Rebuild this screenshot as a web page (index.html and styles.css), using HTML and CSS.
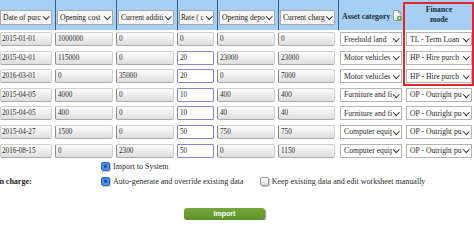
FILE: index.html
```html
<!DOCTYPE html>
<html lang="en">
<head>
    <meta charset="UTF-8">
    <title>Import fixed assets</title>
    <link rel="stylesheet" href="styles.css">
</head>
<body>
    <div class="sheet">
        <div class="grid">
            <div class="hcell first"><div class="hsel"><span>Date of purc</span><i class="chev"></i></div></div>
            <div class="hcell"><div class="hsel"><span>Opening cost</span><i class="chev"></i></div></div>
            <div class="hcell"><div class="hsel"><span>Current additi</span><i class="chev"></i></div></div>
            <div class="hcell"><div class="hsel narrow"><span>Rate ( c</span><i class="chev"></i></div></div>
            <div class="hcell"><div class="hsel"><span>Opening depo</span><i class="chev"></i></div></div>
            <div class="hcell"><div class="hsel"><span>Current charg</span><i class="chev"></i></div></div>
            <div class="hcell htitle">
                <b>Asset category</b>
                <svg class="xls" width="9" height="11" viewBox="0 0 9 11">
                    <path d="M0.5 0.5h5l2.5 2.5v7.5h-7.5z" fill="#f4f4f4" stroke="#9a9a9a"/>
                    <path d="M5.5 0.5v2.5h2.5" fill="none" stroke="#9a9a9a"/>
                    <circle cx="6.3" cy="8.2" r="2.4" fill="#3aa335"/>
                    <path d="M6.3 6.8v2.8M4.9 8.2h2.8" stroke="#fff" stroke-width="0.9"/>
                </svg>
            </div>
            <div class="hcell hmode"><b>Finance<br>mode</b></div>

            <!-- rows -->
            <div class="cell first"><div class="inp">2015-01-01</div></div>
            <div class="cell"><div class="inp">1000000</div></div>
            <div class="cell"><div class="inp">0</div></div>
            <div class="cell"><div class="inp">0</div></div>
            <div class="cell"><div class="inp">0</div></div>
            <div class="cell"><div class="inp">0</div></div>
            <div class="cell sel-cell"><div class="sel"><span>Freehold land</span><i class="chev"></i></div></div>
            <div class="cell sel-cell"><div class="sel"><span>TL - Term Loan</span><i class="chev"></i></div></div>

            <div class="cell first"><div class="inp">2015-02-01</div></div>
            <div class="cell"><div class="inp">115000</div></div>
            <div class="cell"><div class="inp">0</div></div>
            <div class="cell"><div class="inp rate">20</div></div>
            <div class="cell"><div class="inp">23000</div></div>
            <div class="cell"><div class="inp">23000</div></div>
            <div class="cell sel-cell"><div class="sel"><span>Motor vehicles</span><i class="chev"></i></div></div>
            <div class="cell sel-cell"><div class="sel"><span>HP - Hire purch</span><i class="chev"></i></div></div>

            <div class="cell first"><div class="inp">2016-03-01</div></div>
            <div class="cell"><div class="inp">0</div></div>
            <div class="cell"><div class="inp">35000</div></div>
            <div class="cell"><div class="inp rate">20</div></div>
            <div class="cell"><div class="inp">0</div></div>
            <div class="cell"><div class="inp">7000</div></div>
            <div class="cell sel-cell"><div class="sel"><span>Motor vehicles</span><i class="chev"></i></div></div>
            <div class="cell sel-cell"><div class="sel"><span>HP - Hire purch</span><i class="chev"></i></div></div>

            <div class="cell first"><div class="inp">2015-04-05</div></div>
            <div class="cell"><div class="inp">4000</div></div>
            <div class="cell"><div class="inp">0</div></div>
            <div class="cell"><div class="inp rate">10</div></div>
            <div class="cell"><div class="inp">400</div></div>
            <div class="cell"><div class="inp">400</div></div>
            <div class="cell sel-cell"><div class="sel"><span>Furniture and fit</span><i class="chev"></i></div></div>
            <div class="cell sel-cell"><div class="sel"><span>OP - Outright pu</span><i class="chev"></i></div></div>

            <div class="cell first"><div class="inp">2015-04-05</div></div>
            <div class="cell"><div class="inp">400</div></div>
            <div class="cell"><div class="inp">0</div></div>
            <div class="cell"><div class="inp rate">10</div></div>
            <div class="cell"><div class="inp">40</div></div>
            <div class="cell"><div class="inp">40</div></div>
            <div class="cell sel-cell"><div class="sel"><span>Furniture and fit</span><i class="chev"></i></div></div>
            <div class="cell sel-cell"><div class="sel"><span>OP - Outright pu</span><i class="chev"></i></div></div>

            <div class="cell first"><div class="inp">2015-04-27</div></div>
            <div class="cell"><div class="inp">1500</div></div>
            <div class="cell"><div class="inp">0</div></div>
            <div class="cell"><div class="inp rate">50</div></div>
            <div class="cell"><div class="inp">750</div></div>
            <div class="cell"><div class="inp">750</div></div>
            <div class="cell sel-cell"><div class="sel"><span>Computer equip</span><i class="chev"></i></div></div>
            <div class="cell sel-cell"><div class="sel"><span>OP - Outright pu</span><i class="chev"></i></div></div>

            <div class="cell first"><div class="inp">2016-08-15</div></div>
            <div class="cell"><div class="inp">0</div></div>
            <div class="cell"><div class="inp">2300</div></div>
            <div class="cell"><div class="inp rate">50</div></div>
            <div class="cell"><div class="inp">0</div></div>
            <div class="cell"><div class="inp">1150</div></div>
            <div class="cell sel-cell"><div class="sel"><span>Computer equip</span><i class="chev"></i></div></div>
            <div class="cell sel-cell"><div class="sel"><span>OP - Outright pu</span><i class="chev"></i></div></div>
        </div>
        <div class="focus-box"></div>
    </div>

    <div class="options">
        <div class="opt-row">
            <div class="opt-label"></div>
            <label class="radio"><span class="dot on"></span>Import to System</label>
        </div>
        <div class="opt-row">
            <div class="opt-label">Depreciation charge:</div>
            <label class="radio"><span class="dot on"></span>Auto-generate and override existing data</label>
            <label class="radio second"><span class="dot"></span>Keep existing data and edit worksheet manually</label>
        </div>
    </div>

    <div class="actions">
        <button class="import-btn">Import</button>
    </div>
</body>
</html>
```

FILE: styles.css
```css
body {
    margin: 0;
    padding: 0;
    background: white;
    color: #2b2b2b;
    font-family: "Liberation Serif", serif;
    font-size: 8px;
    overflow: hidden;
}
.sheet {
    position: relative;
}
.grid {
    display: grid;
    grid-template-columns: 55px 61px 61px 40px 61px 60px 66px 70px;
    grid-auto-rows: 18.6px;
    grid-template-rows: 30px;
    font-size: 7.2px;
}
.hcell {
    background: #a6cff3;
    border-left: 1px solid #2f618f;
    padding: 10px 3px 0 1px;
    box-sizing: border-box;
}
.hcell.first {
    border-left: none;
    padding-left: 0;
}
.hsel {
    display: flex;
    align-items: center;
    height: 15px;
    box-sizing: border-box;
    background: #f6f6f6;
    border: 1px solid #a9a9a9;
    padding: 0 2px 0 2px;
    color: #222;
    font-size: 7.6px;
    white-space: nowrap;
    overflow: hidden;
}
.hsel.narrow {
    padding: 0 1px 0 1px;
    font-size: 7.3px;
}
.hsel span,
.sel span {
    flex: 1;
    overflow: hidden;
}
.chev {
    flex: none;
    width: 3.5px;
    height: 3.5px;
    border-right: 1.1px solid #333;
    border-bottom: 1.1px solid #333;
    transform: rotate(45deg);
    margin: -2px 1px 0 2px;
}
.htitle {
    display: flex;
    align-items: flex-start;
    padding: 10px 0 0 3px;
    color: #1b2a3a;
    font-size: 7.8px;
    white-space: nowrap;
}
.htitle b {
    margin-top: 2px;
}
.xls {
    margin-left: 3px;
}
.hmode {
    border-left: none;
    padding: 5px 0 0;
    text-align: center;
    line-height: 10px;
    color: #1b2a3a;
    font-size: 7.8px;
}
.cell {
    padding: 2px 3px 0 0;
}
.cell.first {
    padding-left: 0;
}
.inp {
    height: 14px;
    box-sizing: border-box;
    border: 1px solid #cfcfcf;
    border-left-color: #8a8a8a;
    border-bottom-color: #a9a9a9;
    border-radius: 2px;
    background: linear-gradient(#fdfdfd, #dedede);
    padding-left: 2px;
    line-height: 12px;
    white-space: nowrap;
    overflow: hidden;
}
.cell.first .inp {
    border-left-color: #cfcfcf;
    padding-left: 1px;
}
.inp.rate {
    background: white;
    border: 1px solid #8985c6;
    border-radius: 1px;
}
.sel-cell {
    padding: 2px 2px 0 2px;
}
.sel {
    display: flex;
    align-items: center;
    height: 14px;
    box-sizing: border-box;
    background: white;
    border: 1px solid #b5b5b5;
    padding: 0 2px 0 3px;
    font-size: 7.7px;
    white-space: nowrap;
}
.focus-box {
    position: absolute;
    left: 403px;
    top: 2px;
    width: 71px;
    height: 84px;
    box-sizing: border-box;
    border: 2px solid #e2242b;
}
.options {
    display: flex;
    flex-direction: column;
    gap: 3px;
}
.opt-row {
    display: flex;
    align-items: center;
    height: 12px;
    white-space: nowrap;
}
.opt-label {
    width: 101px;
    flex: none;
    font-weight: bold;
    text-indent: -40px;
    color: #222;
}
.radio {
    display: flex;
    align-items: center;
}
.radio.second {
    margin-left: 16px;
}
.dot {
    width: 7px;
    height: 7px;
    border-radius: 2px;
    margin-right: 3px;
    border: 1px solid #9a9a9a;
    background: linear-gradient(#fff, #ddd);
    box-shadow: 1px 1px 0 #ccc;
}
.dot.on {
    border-color: #2a63b8;
    background: radial-gradient(circle at 50% 45%, #1a4fa8 0 1.5px, #4c8fe6 2px);
}
.actions {
    display: flex;
    padding-left: 184px;
    margin-top: 21px;
}
.import-btn {
    width: 81px;
    height: 12px;
    padding: 0;
    border: none;
    border-radius: 3px;
    background: linear-gradient(#74a83a, #5f9128);
    box-shadow: 1px 1px 1px #999;
    color: white;
    font-family: "Liberation Sans", Arial, sans-serif;
    font-size: 7px;
    font-weight: bold;
    line-height: 12px;
}
```
